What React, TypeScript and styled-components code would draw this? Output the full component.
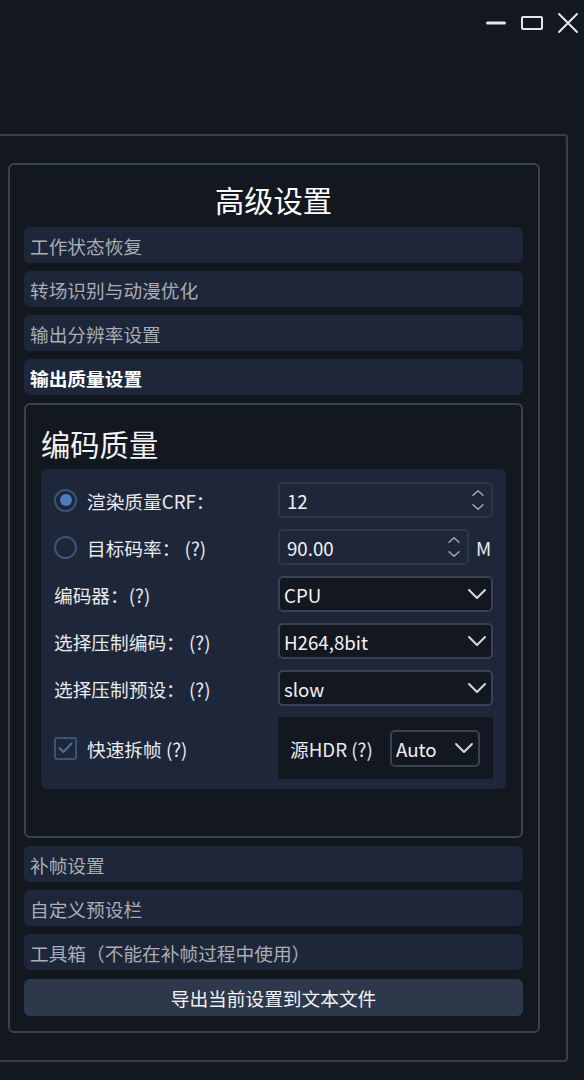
import React from "react";
import styled, { createGlobalStyle } from "styled-components";

const GlobalStyle = createGlobalStyle`
  html, body {
    margin: 0;
    padding: 0;
    background: #131720;
  }
  body {
    font-family: "Noto Sans CJK SC", "Noto Sans", sans-serif;
    color: #e8eaee;
    overflow: hidden;
  }
  * { box-sizing: border-box; }
`;

const FS = "18.7px";

const Page = styled.div`
  width: 584px;
  height: 1080px;
  display: flex;
  flex-direction: column;
  background: #131720;
`;

const TitleBar = styled.div`
  height: 134px;
  display: flex;
  justify-content: flex-end;
  align-items: flex-start;
  padding: 12px 5px 0 0;
  gap: 14px;
`;

const WinButton = styled.div`
  width: 22px;
  height: 22px;
  display: flex;
  align-items: center;
  justify-content: center;
  color: #e4e6ea;
`;

const Frame = styled.div`
  width: 568px;
  height: 928px;
  border: 2px solid #343e4e;
  border-left: none;
  border-radius: 0 4px 4px 0;
  padding: 27px 26px 27px 8px;
`;

const Panel = styled.div`
  width: 532px;
  height: 870px;
  border: 2px solid #374253;
  border-radius: 6px;
  padding: 0 15px 15px 14px;
  display: flex;
  flex-direction: column;
`;

const PanelTitle = styled.div`
  height: 62px;
  padding-top: 14px;
  font-size: 29.3px;
  line-height: 40px;
  text-align: center;
  color: #ffffff;
`;

const SectionList = styled.div`
  display: flex;
  flex-direction: column;
  gap: 8px;
`;

const SectionHeader = styled.div<{ $active?: boolean }>`
  height: 36px;
  border-radius: 6px;
  background: #1e2739;
  padding: 0 6px;
  display: flex;
  align-items: center;
  font-size: ${FS};
  font-weight: ${(p) => (p.$active ? 700 : 400)};
  color: ${(p) => (p.$active ? "#ffffff" : "#a9adb5")};
`;

const ContentBox = styled.div`
  height: 435px;
  border: 2px solid #374253;
  border-radius: 6px;
  padding: 18px 15px 0 15px;
`;

const ContentTitle = styled.div`
  font-size: 29.3px;
  line-height: 40px;
  color: #f2f3f5;
  margin-bottom: 6px;
`;

const Card = styled.div`
  background: #1e2739;
  border-radius: 6px;
  padding: 13px 13px 10px 13px;
  display: grid;
  grid-template-columns: 224px 215px;
  grid-template-rows: repeat(5, 36px) 62px;
  row-gap: 11px;
`;

const FieldLabel = styled.div`
  display: flex;
  align-items: center;
  gap: 10px;
  font-size: ${FS};
  color: #e8eaee;
  white-space: pre;
`;

const Radio = styled.span<{ $checked?: boolean }>`
  width: 23px;
  height: 23px;
  border-radius: 50%;
  border: 2.5px solid #3a5476;
  display: flex;
  align-items: center;
  justify-content: center;
  &::after {
    content: "";
    width: 12px;
    height: 12px;
    border-radius: 50%;
    background: ${(p) => (p.$checked ? "#4f7dbb" : "transparent")};
  }
`;

const CheckBox = styled.span`
  width: 23px;
  height: 23px;
  border-radius: 3px;
  border: 2px solid #3a5476;
  display: flex;
  align-items: center;
  justify-content: center;
  color: #4f6f99;
`;

const ControlCell = styled.div`
  display: flex;
  align-items: center;
  gap: 7px;
  font-size: ${FS};
  color: #e8eaee;
`;

const SpinBox = styled.div<{ $width: number }>`
  width: ${(p) => p.$width}px;
  height: 36px;
  border: 2px solid #2c3747;
  border-radius: 5px;
  display: flex;
  align-items: center;
  justify-content: space-between;
  padding: 0 7px 0 7px;
  font-size: ${FS};
  color: #f0f1f3;
`;

const SpinArrows = styled.div`
  display: flex;
  flex-direction: column;
  gap: 8px;
  color: #a3a8b0;
`;

const Combo = styled.div<{ $width?: number; $height?: number }>`
  width: ${(p) => (p.$width ? `${p.$width}px` : "100%")};
  height: ${(p) => (p.$height ? `${p.$height}px` : "36px")};
  background: #131720;
  border: 2px solid #374253;
  border-radius: 5px;
  display: flex;
  align-items: center;
  justify-content: space-between;
  padding: 0 4px 0 4px;
  font-size: ${FS};
  color: #f0f1f3;
`;

const HdrBox = styled.div`
  height: 62px;
  background: #131720;
  display: flex;
  align-items: center;
  justify-content: space-between;
  padding: 0 13px 0 12px;
  font-size: ${FS};
  color: #e8eaee;
`;

const HdrRow = styled.div`
  grid-column: 1 / -1;
  display: grid;
  grid-template-columns: 224px 215px;
  height: 62px;
`;

const CheckLabel = styled(FieldLabel)`
  height: 62px;
`;

const ExportButton = styled.div`
  height: 37px;
  margin-top: 1px;
  border-radius: 6px;
  background: #2d394b;
  display: flex;
  align-items: center;
  justify-content: center;
  font-size: ${FS};
  color: #f2f3f5;
`;

const Unit = styled.span`
  font-size: ${FS};
  color: #e8eaee;
`;

const ChevronDown = () => (
  <svg width="20" height="12" viewBox="0 0 20 12" fill="none">
    <path d="M2 2 L10 10 L18 2" stroke="#d5d8dd" strokeWidth="2" strokeLinecap="round" strokeLinejoin="round" />
  </svg>
);

const SmallUp = () => (
  <svg width="12" height="6" viewBox="0 0 12 6" fill="none">
    <path d="M1 5.2 L6 0.8 L11 5.2" stroke="currentColor" strokeWidth="1.5" strokeLinecap="round" strokeLinejoin="round" />
  </svg>
);

const SmallDown = () => (
  <svg width="12" height="6" viewBox="0 0 12 6" fill="none">
    <path d="M1 0.8 L6 5.2 L11 0.8" stroke="currentColor" strokeWidth="1.5" strokeLinecap="round" strokeLinejoin="round" />
  </svg>
);

const Spin = ({ value, width }: { value: string; width: number }) => (
  <SpinBox $width={width}>
    <span>{value}</span>
    <SpinArrows>
      <SmallUp />
      <SmallDown />
    </SpinArrows>
  </SpinBox>
);

const Select = ({ value, width, height }: { value: string; width?: number; height?: number }) => (
  <Combo $width={width} $height={height}>
    <span>{value}</span>
    <ChevronDown />
  </Combo>
);

export default function App() {
  return (
    <>
      <GlobalStyle />
      <Page>
        <TitleBar>
          <WinButton>
            <svg width="22" height="22" viewBox="0 0 22 22">
              <rect x="1" y="9.5" width="20" height="3" rx="1.5" fill="currentColor" />
            </svg>
          </WinButton>
          <WinButton>
            <svg width="22" height="22" viewBox="0 0 22 22" fill="none">
              <rect x="1" y="5" width="20" height="12" rx="1" stroke="currentColor" strokeWidth="2" />
            </svg>
          </WinButton>
          <WinButton>
            <svg width="22" height="22" viewBox="0 0 22 22" fill="none">
              <path d="M2 2 L20 20 M20 2 L2 20" stroke="currentColor" strokeWidth="2" strokeLinecap="round" />
            </svg>
          </WinButton>
        </TitleBar>
        <Frame>
          <Panel>
            <PanelTitle>高级设置</PanelTitle>
            <SectionList>
              <SectionHeader>工作状态恢复</SectionHeader>
              <SectionHeader>转场识别与动漫优化</SectionHeader>
              <SectionHeader>输出分辨率设置</SectionHeader>
              <SectionHeader $active>输出质量设置</SectionHeader>
              <ContentBox>
                <ContentTitle>编码质量</ContentTitle>
                <Card>
                  <FieldLabel>
                    <Radio $checked />
                    渲染质量CRF：
                  </FieldLabel>
                  <ControlCell>
                    <Spin value="12" width={215} />
                  </ControlCell>

                  <FieldLabel>
                    <Radio />
                    目标码率： (?)
                  </FieldLabel>
                  <ControlCell>
                    <Spin value="90.00" width={191} />
                    <Unit>M</Unit>
                  </ControlCell>

                  <FieldLabel>编码器：(?)</FieldLabel>
                  <ControlCell>
                    <Select value="CPU" />
                  </ControlCell>

                  <FieldLabel>选择压制编码： (?)</FieldLabel>
                  <ControlCell>
                    <Select value="H264,8bit" />
                  </ControlCell>

                  <FieldLabel>选择压制预设： (?)</FieldLabel>
                  <ControlCell>
                    <Select value="slow" />
                  </ControlCell>

                  <HdrRow>
                    <CheckLabel>
                      <CheckBox>
                        <svg width="15" height="12" viewBox="0 0 15 12" fill="none">
                          <path d="M1.5 6 L5.5 10 L13.5 1.5" stroke="currentColor" strokeWidth="2" strokeLinecap="round" strokeLinejoin="round" />
                        </svg>
                      </CheckBox>
                      快速拆帧 (?)
                    </CheckLabel>
                    <HdrBox>
                      <span>源HDR (?)</span>
                      <Select value="Auto" width={90} height={37} />
                    </HdrBox>
                  </HdrRow>
                </Card>
              </ContentBox>
              <SectionHeader>补帧设置</SectionHeader>
              <SectionHeader>自定义预设栏</SectionHeader>
              <SectionHeader>工具箱（不能在补帧过程中使用）</SectionHeader>
              <ExportButton>导出当前设置到文本文件</ExportButton>
            </SectionList>
          </Panel>
        </Frame>
      </Page>
    </>
  );
}
